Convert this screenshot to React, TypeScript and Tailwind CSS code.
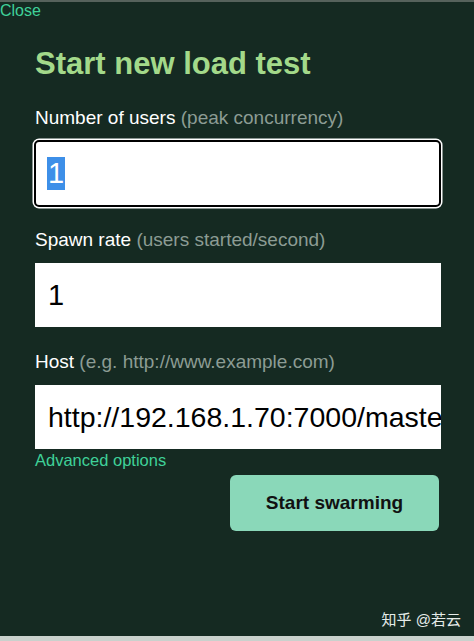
import React from 'react';

const FONT = { fontFamily: '"Liberation Sans", Arial, sans-serif' };

interface FieldProps {
  label: string;
  hint: string;
  children: React.ReactNode;
}

const Field: React.FC<FieldProps> = ({ label, hint, children }) => (
  <div className="flex flex-col">
    <label className="text-[19px] leading-[22px] text-white">
      {label} <span className="text-[#8c9c94]">{hint}</span>
    </label>
    {children}
  </div>
);

export default function App() {
  return (
    <div className="w-[474px] h-[641px] bg-[#152a22] flex flex-col overflow-hidden" style={FONT}>
      <div className="h-[2px] bg-[#56625c]" />
      <div className="flex-1 flex flex-col">
        <a className="text-[16px] leading-[18px] text-[#3fd199] self-start">Close</a>

        <div className="pl-[35px] w-[441px] flex flex-col">
          <h1 className="mt-[26px] text-[31px] leading-[36px] font-bold text-[#a3d98a]">
            Start new load test
          </h1>

          <div className="mt-[25px]">
            <Field label="Number of users" hint="(peak concurrency)">
              <div className="mt-[11px] -ml-px h-[67px] rounded-[5px] bg-white border-2 border-black shadow-[0_0_0_1.5px_white] flex items-center pl-[11px]">
                <span className="text-[29px] leading-[33px] bg-[#3d8fe8] text-white px-px">1</span>
              </div>
            </Field>
          </div>

          <div className="mt-[22px]">
            <Field label="Spawn rate" hint="(users started/second)">
              <div className="mt-[12px] h-[64px] bg-white flex items-center pl-[13px]">
                <span className="text-[29px] leading-[33px] text-black">1</span>
              </div>
            </Field>
          </div>

          <div className="mt-[24px]">
            <Field label="Host" hint="(e.g. http://www.example.com)">
              <div className="mt-[12px] h-[64px] bg-white flex items-center pl-[13px] overflow-hidden whitespace-nowrap">
                <span className="text-[28.5px] leading-[33px] text-black">http://192.168.1.70:7000/master</span>
              </div>
            </Field>
          </div>

          <a className="mt-[1px] text-[16.5px] leading-[20px] text-[#3fd199] self-start">Advanced options</a>

          <div className="flex justify-end mt-[5px] pr-[2px]">
            <button className="w-[209px] h-[56px] rounded-[6px] bg-[#8ad8b9] text-[19px] font-bold text-[#111]">
              Start swarming
            </button>
          </div>
        </div>

        <div className="mt-auto mb-[7px] pr-[13px] flex justify-end">
          <span
            className="text-[15px] leading-[18px] text-[#e6ece9]"
            style={{ fontFamily: '"Liberation Sans", "Noto Sans CJK SC", sans-serif' }}
          >
            知乎 @若云
          </span>
        </div>
      </div>
      <div className="h-[5px] bg-[#c9d1cd]" />
    </div>
  );
}
